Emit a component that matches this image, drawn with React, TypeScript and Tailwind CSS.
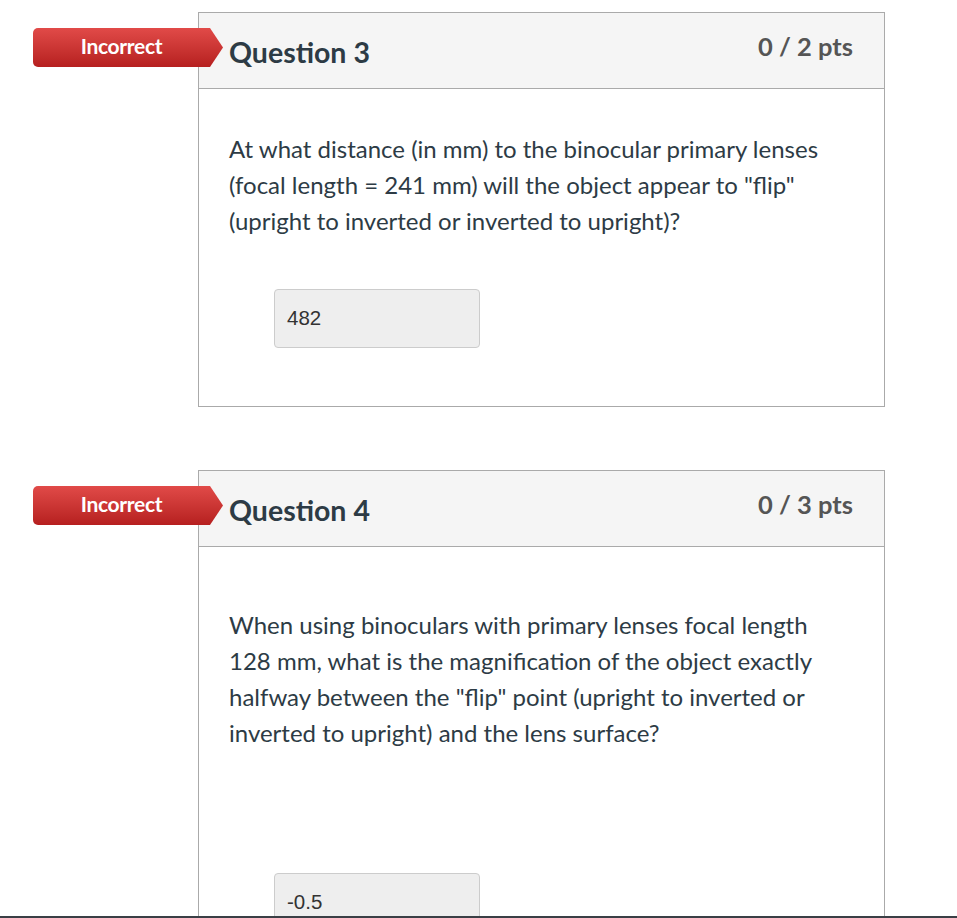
import React from 'react'

interface QuestionProps {
  num: number
  pts: string
  lines: string[]
  answer: string
  bodyTop: string
  answerGap: string
  bottomPad: string
}

function IncorrectBadge() {
  return (
    <div
      className="absolute left-[-166px] top-[15px] flex h-[39px] w-[190px] items-center rounded-l-[5px] bg-gradient-to-b from-[#e14a48] to-[#b61f1f] pr-[13px] [clip-path:polygon(0_0,177px_0,190px_50%,177px_100%,0_100%)]"
    >
      <span className="flex-1 pb-[4px] text-center text-[21px] font-bold tracking-[-0.3px] text-white">Incorrect</span>
    </div>
  )
}

function Question({ num, pts, lines, answer, bodyTop, answerGap, bottomPad }: QuestionProps) {
  return (
    <div className="relative ml-[198px] w-[687px] border border-[#aaaaaa] bg-white">
      <IncorrectBadge />
      <div className="flex h-[76px] items-center justify-between border-b border-[#aaaaaa] bg-[#f5f5f5] pl-[30px] pr-[31px]">
        <h2 className="pt-[4px] text-[28.5px] font-bold text-[#2d3b45]">Question {num}</h2>
        <span className="pb-[8px] text-[25.5px] font-bold text-[#555555]">{pts}</span>
      </div>
      <div className={`pl-[30px] pr-[20px] ${bodyTop} ${bottomPad}`}>
        <p className="text-[24px] leading-[36px] text-[#2d3b45]">
          {lines.map((l, i) => (
            <span key={i} className="block whitespace-nowrap">{l}</span>
          ))}
        </p>
        <div className={`ml-[45px] ${answerGap}`}>
          <div className="flex h-[59px] w-[206px] items-center rounded-[4px] border border-[#cccccc] bg-[#eeeeee] px-[12px] text-[20.5px] text-[#333333] [font-family:'Liberation_Sans',sans-serif]">
            {answer}
          </div>
        </div>
      </div>
    </div>
  )
}

export default function App() {
  return (
    <div className="relative h-[918px] w-[957px] overflow-hidden bg-white [font-family:Lato,'Noto_Sans',sans-serif]">
      <div className="flex flex-col gap-[63px] pt-[12px]">
        <Question
          num={3}
          pts="0 / 2 pts"
          lines={[
            'At what distance (in mm) to the binocular primary lenses',
            '(focal length = 241 mm) will the object appear to "flip"',
            '(upright to inverted or inverted to upright)?',
          ]}
          answer="482"
          bodyTop="pt-[42px]"
          answerGap="mt-[50px]"
          bottomPad="pb-[58px]"
        />
        <Question
          num={4}
          pts="0 / 3 pts"
          lines={[
            'When using binoculars with primary lenses focal length',
            '128 mm, what is the magnification of the object exactly',
            'halfway between the "flip" point (upright to inverted or',
            'inverted to upright) and the lens surface?',
          ]}
          answer="-0.5"
          bodyTop="pt-[60px]"
          answerGap="mt-[122px]"
          bottomPad="pb-[58px]"
        />
      </div>
      <div className="absolute bottom-0 left-0 h-[2px] w-full bg-[#3a3f45]" />
    </div>
  )
}
